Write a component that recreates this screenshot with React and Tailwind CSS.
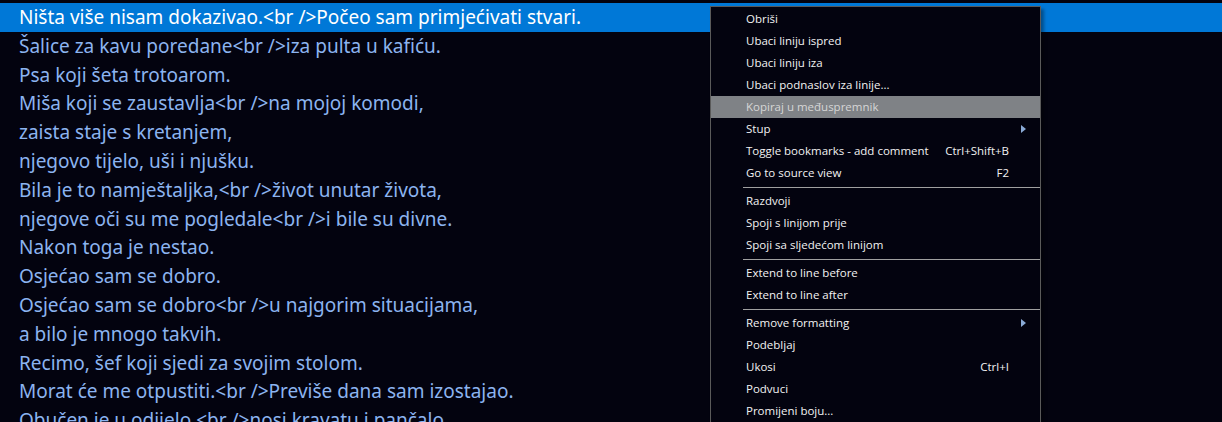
const lines = [
  'Ništa više nisam dokazivao.<br />Počeo sam primjećivati stvari.',
  'Šalice za kavu poredane<br />iza pulta u kafiću.',
  'Psa koji šeta trotoarom.',
  'Miša koji se zaustavlja<br />na mojoj komodi,',
  'zaista staje s kretanjem,',
  'njegovo tijelo, uši i njušku.',
  'Bila je to namještaljka,<br />život unutar života,',
  'njegove oči su me pogledale<br />i bile su divne.',
  'Nakon toga je nestao.',
  'Osjećao sam se dobro.',
  'Osjećao sam se dobro<br />u najgorim situacijama,',
  'a bilo je mnogo takvih.',
  'Recimo, šef koji sjedi za svojim stolom.',
  'Morat će me otpustiti.<br />Previše dana sam izostajao.',
  'Obučen je u odijelo,<br />nosi kravatu i pančalo.',
]

const menu = [
  { label: 'Obriši' },
  { label: 'Ubaci liniju ispred' },
  { label: 'Ubaci liniju iza' },
  { label: 'Ubaci podnaslov iza linije...' },
  { label: 'Kopiraj u međuspremnik', active: true },
  { label: 'Stup', sub: true },
  { label: 'Toggle bookmarks - add comment', key: 'Ctrl+Shift+B' },
  { label: 'Go to source view', key: 'F2' },
  { sep: true },
  { label: 'Razdvoji' },
  { label: 'Spoji s linijom prije' },
  { label: 'Spoji sa sljedećom linijom' },
  { sep: true },
  { label: 'Extend to line before' },
  { label: 'Extend to line after' },
  { sep: true },
  { label: 'Remove formatting', sub: true },
  { label: 'Podebljaj' },
  { label: 'Ukosi', key: 'Ctrl+I' },
  { label: 'Podvuci' },
  { label: 'Promijeni boju...' },
]

function MenuRow({ item }) {
  if (item.sep) {
    return (
      <div className="h-[6px] flex items-center pl-[32px]">
        <div className="h-px w-full bg-[#a0a0a0]" />
      </div>
    )
  }
  return (
    <div className={`h-[22px] flex items-center pl-[35px] pr-[31px] ${item.active ? 'bg-[#7f8286] text-[#d6d6d6]' : 'text-[#f2f2f2]'}`}>
      <span className="flex-1 whitespace-nowrap">{item.label}</span>
      {item.key && <span className="whitespace-nowrap">{item.key}</span>}
      {item.sub && (
        <svg width="5" height="8" viewBox="0 0 5 8" className="mr-[-17px]">
          <path d="M0 0 L5 4 L0 8 Z" fill="#8aaad6" />
        </svg>
      )}
    </div>
  )
}

export default function App() {
  return (
    <div className="relative w-full h-[422px] overflow-hidden bg-[#03030f]">
      <div className="pt-[3px] text-[19px] leading-[28.8px]" style={{ fontFamily: '"Noto Sans", sans-serif' }}>
        {lines.map((t, i) => (
          <div key={i} className={`pl-[19px] whitespace-nowrap ${i === 0 ? 'bg-[#0078d7] text-white' : 'text-[#8cb4f0]'}`}>
            {t}
          </div>
        ))}
      </div>

      <div
        className="absolute left-[710px] top-[6px] w-[331px] border border-[#5a5a5a] bg-[#03030f] pt-px text-[11.5px] shadow-[3px_3px_3px_rgba(0,0,0,0.35)]"
        style={{ fontFamily: '"Open Sans", "Noto Sans", sans-serif' }}
      >
        {menu.map((item, i) => <MenuRow key={i} item={item} />)}
      </div>
    </div>
  )
}
